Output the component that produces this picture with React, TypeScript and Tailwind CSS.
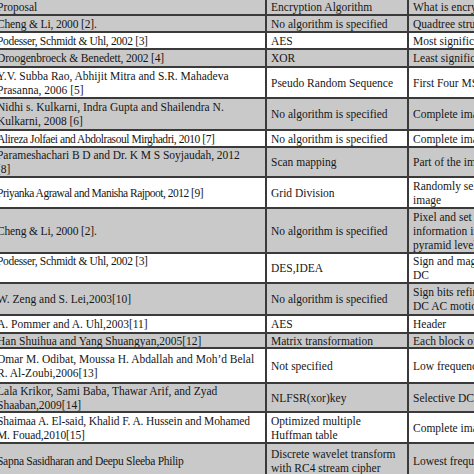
const rows: {
  a: string[];
  b: string[];
  c: string[];
  gray: boolean;
  h: string;
  s?: string;
  top?: boolean;
}[] = [
  { a: ["Proposal"], b: ["Encryption Algorithm"], c: ["What is encrypted"], gray: true, h: "h-[16px]" },
  { a: ["Cheng & Li, 2000 [2]."], b: ["No algorithm is specified"], c: ["Quadtree structure"], gray: true, h: "h-[17px]", s: "tracking-[-0.15px]" },
  { a: ["Podesser, Schmidt & Uhl, 2002 [3]"], b: ["AES"], c: ["Most significant bitplanes"], gray: false, h: "h-[17px]", s: "tracking-[-0.33px]" },
  { a: ["Droogenbroeck & Benedett, 2002 [4]"], b: ["XOR"], c: ["Least significant bitplanes"], gray: true, h: "h-[18px]", s: "tracking-[-0.15px]" },
  {
    a: ["Y.V. Subba Rao, Abhijit Mitra and S.R. Mahadeva", "Prasanna, 2006 [5]"],
    b: ["Pseudo Random Sequence"],
    c: ["First Four MSB planes"],
    gray: false,
    h: "h-[31px]",
  },
  {
    a: ["Nidhi s. Kulkarni, Indra Gupta and Shailendra N.", "Kulkarni, 2008 [6]"],
    b: ["No algorithm is specified"],
    c: ["Complete image"],
    gray: true,
    h: "h-[32px]",
  },
  {
    a: ["Alireza Jolfaei and Abdolrasoul Mirghadri, 2010 [7]"],
    b: ["No algorithm is specified"],
    c: ["Complete image"],
    gray: false,
    h: "h-[17px]",
    s: "tracking-[-0.45px]",
  },
  {
    a: ["Parameshachari B D and Dr. K M S Soyjaudah, 2012", "[8]"],
    b: ["Scan mapping"],
    c: ["Part of the image"],
    gray: true,
    h: "h-[30px]",
    s: "tracking-[-0.05px]",
  },
  {
    a: ["Priyanka Agrawal and Manisha Rajpoot, 2012 [9]"],
    b: ["Grid Division"],
    c: ["Randomly selected blocks of", "image"],
    gray: false,
    h: "h-[31px]",
    s: "tracking-[-0.5px]",
  },
  {
    a: ["Cheng & Li, 2000 [2]."],
    b: ["No algorithm is specified"],
    c: ["Pixel and set partitioning", "information in the", "pyramid levels"],
    gray: true,
    h: "h-[45px]",
    s: "tracking-[-0.15px]",
  },
  {
    a: ["Podesser, Schmidt & Uhl, 2002 [3]"],
    b: ["DES,IDEA"],
    c: ["Sign and magnitude of", "DC"],
    gray: false,
    h: "h-[30px]",
    s: "tracking-[-0.33px]",
    top: true,
  },
  { a: ["W. Zeng and S. Lei,2003[10]"], b: ["No algorithm is specified"], c: ["Sign bits refinement,", "DC AC motion vectors"], gray: true, h: "h-[32px]" },
  { a: ["A. Pommer and A. Uhl,2003[11]"], b: ["AES"], c: ["Header"], gray: false, h: "h-[18px]" },
  { a: ["Han Shuihua and Yang Shuangyan,2005[12]"], b: ["Matrix transformation"], c: ["Each block of image"], gray: true, h: "h-[15px]" },
  {
    a: ["Omar M. Odibat, Moussa H. Abdallah and Moh\u2019d Belal", "R. Al-Zoubi,2006[13]"],
    b: ["Not specified"],
    c: ["Low frequency coefficients"],
    gray: false,
    h: "h-[35px]",
  },
  {
    a: ["Lala Krikor, Sami Baba, Thawar Arif, and Zyad", "Shaaban,2009[14]"],
    b: ["NLFSR(xor)key"],
    c: ["Selective DCT coefficients"],
    gray: true,
    h: "h-[29px]",
  },
  {
    a: ["Shaimaa A. El-said, Khalid F. A. Hussein and Mohamed", "M. Fouad,2010[15]"],
    b: ["Optimized multiple", "Huffman table"],
    c: ["Complete image"],
    gray: false,
    h: "h-[31px]",
    s: "tracking-[-0.12px]",
  },
  {
    a: ["Sapna Sasidharan and Deepu Sleeba Philip"],
    b: ["Discrete wavelet transform", "with RC4 stream cipher"],
    c: ["Lowest frequency subband"],
    gray: true,
    h: "h-[36px]",
    s: "tracking-[-0.28px]",
  },
];

function Lines({ lines }: { lines: string[] }) {
  return (
    <div>
      {lines.map((l) => (
        <div key={l} className="whitespace-nowrap">
          {l}
        </div>
      ))}
    </div>
  );
}

export default function App() {
  return (
    <div className="w-[474px] h-[474px] overflow-hidden bg-white">
      <div
        className="-ml-[5px] w-[620px] text-[11.5px] leading-[14px] text-[#161616]"
        style={{ fontFamily: '"Liberation Serif", "Times New Roman", serif' }}
      >
        {rows.map((r, i) => (
          <div
            key={i}
            className={`flex border-b-2 border-[#3a3a3a] ${r.h} ${r.gray ? "bg-[#c9c9c9]" : "bg-white"}`}
          >
            <div
              className={`w-[272px] shrink-0 border-r-2 border-[#3a3a3a] pl-[2px] pr-1 flex overflow-hidden ${
                r.top ? "items-start" : "items-center"
              } ${r.s ?? ""}`}
            >
              <Lines lines={r.a} />
            </div>
            <div className="w-[142px] shrink-0 border-r-2 border-[#3a3a3a] px-[4px] flex items-center overflow-hidden">
              <Lines lines={r.b} />
            </div>
            <div className="flex-1 px-[4px] flex items-center overflow-hidden">
              <Lines lines={r.c} />
            </div>
          </div>
        ))}
      </div>
    </div>
  );
}
